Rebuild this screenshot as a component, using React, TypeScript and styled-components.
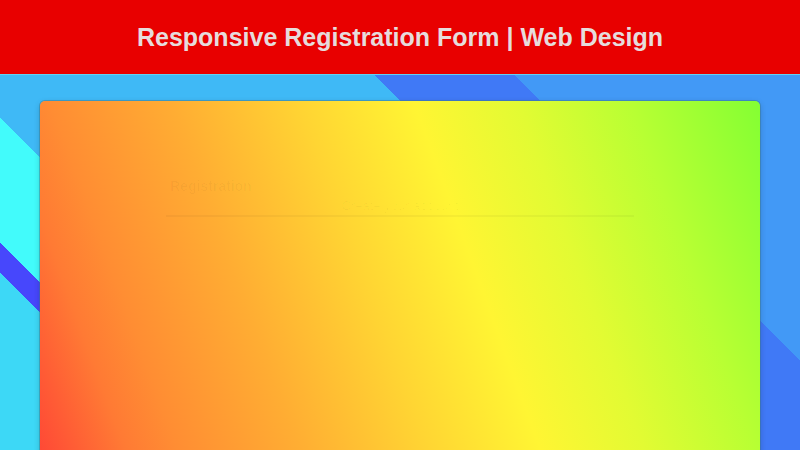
import styled, { createGlobalStyle } from "styled-components";

const GlobalStyle = createGlobalStyle`
  * {
    box-sizing: border-box;
  }

  html,
  body {
    margin: 0;
    padding: 0;
    height: 100%;
    overflow: hidden;
    font-family: "Liberation Sans", Arial, sans-serif;
  }
`;

const Page = styled.div`
  display: flex;
  flex-direction: column;
  width: 100%;
  height: 100vh;
`;

const Header = styled.header`
  display: flex;
  align-items: center;
  justify-content: center;
  height: 74px;
  flex-shrink: 0;
  background-color: #e80000;

  h1 {
    margin: 0;
    font-size: 25px;
    font-weight: bold;
    color: #e6dcdc;
  }
`;

// diagonal stripes behind the card, hard stops at 45deg
const Backdrop = styled.main`
  flex: 1;
  display: flex;
  flex-direction: column;
  padding: 26px 40px 0;
  overflow: hidden;
  border-top: 1px solid #62d2f4;
  background: linear-gradient(
    45deg,
    #3dd8f6 0%,
    #3dd8f6 15.1%,
    #4747fc 15.1%,
    #4747fc 17.7%,
    #42fbfb 17.7%,
    #42fbfb 28.3%,
    #3fb9f6 28.3%,
    #3fb9f6 63.8%,
    #4079f6 63.8%,
    #4079f6 75.7%,
    #4299f6 75.7%,
    #4299f6 100%
  );
`;

const Card = styled.section`
  display: flex;
  flex-direction: column;
  align-items: center;
  flex-shrink: 0;
  height: 400px;
  padding-top: 73px;
  border-radius: 5px;
  box-shadow: 0 0 0 1px rgba(60, 120, 140, 0.45), 0 2px 6px rgba(0, 0, 0, 0.2);
  background: linear-gradient(
    70deg,
    #ff3f36 0%,
    #ff5c35 6%,
    #ff7a34 12%,
    #ff8d33 18%,
    #ffad33 32%,
    #ffd533 47%,
    #fff533 60%,
    #e2fb33 72%,
    #b8ff33 85%,
    #84ff33 100%
  );
`;

const FormHead = styled.div`
  display: flex;
  flex-direction: column;
  gap: 4px;
  width: 468px;
  padding: 4px 4px 2px;
  border-bottom: 2px solid rgba(0, 0, 0, 0.035);
  color: rgba(0, 0, 0, 0.03);
  font-size: 13px;

  h2 {
    margin: 0;
    font-size: 14px;
    font-weight: bold;
  }

  p {
    margin: 0;
    text-align: center;
  }
`;

export default function App() {
  return (
    <>
      <GlobalStyle />
      <Page>
        <Header>
          <h1>Responsive Registration Form | Web Design</h1>
        </Header>
        <Backdrop>
          <Card>
            <FormHead>
              <h2>Registration</h2>
              <p>Create your account</p>
            </FormHead>
          </Card>
        </Backdrop>
      </Page>
    </>
  );
}
